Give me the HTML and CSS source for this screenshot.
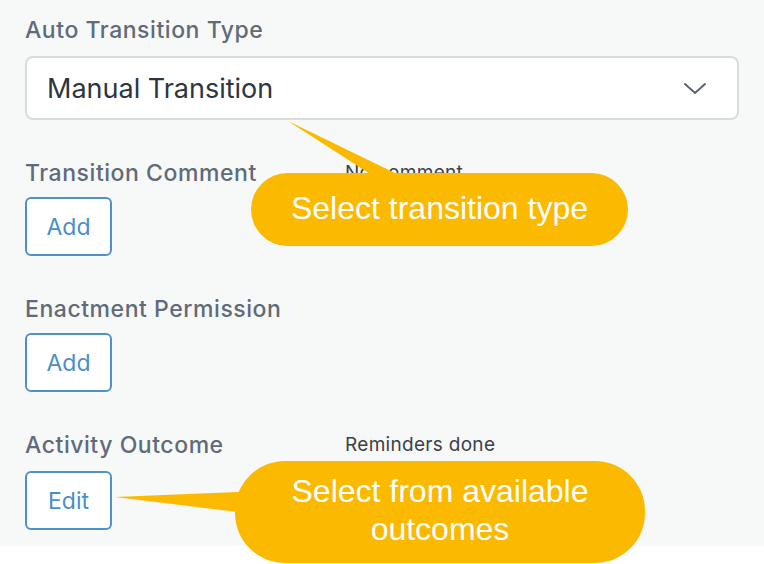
FILE: index.html
```html
<!DOCTYPE html>
<html lang="en">
<head>
<meta charset="utf-8">
<title>Transition settings</title>
<link rel="stylesheet" href="styles.css">
</head>
<body>
<div class="page">
  <div class="field field-first">
    <div class="label">Auto Transition Type</div>
    <div class="select">
      <span class="select-value">Manual Transition</span>
      <svg class="chevron" width="24" height="14" viewBox="0 0 24 14"><polyline points="2,2 12,11 22,2" fill="none" stroke="#5b6470" stroke-width="2" stroke-linecap="round" stroke-linejoin="round"/></svg>
    </div>
  </div>

  <div class="field">
    <div class="row">
      <div class="label">Transition Comment</div>
      <div class="side">No comment</div>
    </div>
    <button class="btn">Add</button>
  </div>

  <div class="field">
    <div class="row">
      <div class="label">Enactment Permission</div>
    </div>
    <button class="btn">Add</button>
  </div>

  <div class="field field-last">
    <div class="row">
      <div class="label">Activity Outcome</div>
      <div class="side">Reminders done</div>
    </div>
    <button class="btn">Edit</button>
  </div>
</div>

<svg class="tails" width="764" height="564" viewBox="0 0 764 564">
  <polygon points="288,121 398,192 434,192" fill="#fbb900"/>
  <polygon points="115,497 262,491 262,515" fill="#fbb900"/>
</svg>
<div class="callout callout-one">Select transition type</div>
<div class="callout callout-two">Select from available<br>outcomes</div>
</body>
</html>
```
FILE: styles.css
```css
* { box-sizing: border-box; }
html, body { margin: 0; padding: 0; background: #ffffff; }
body {
  position: relative;
  width: 764px;
  height: 564px;
  overflow: hidden;
  font-family: Inter, "Noto Sans", sans-serif;
}
.page {
  background: #f7f8f8;
  height: 546px;
  padding: 16px 25px 0 25px;
  display: flex;
  flex-direction: column;
}
.field {
  display: flex;
  flex-direction: column;
  align-items: flex-start;
  gap: 10px;
  margin-top: 39px;
}
.field-first { margin-top: 0; gap: 12px; align-items: stretch; }
.field-last { gap: 12px; }
.row {
  display: grid;
  grid-template-columns: 320px auto;
  align-items: start;
}
.label {
  font-size: 23px;
  line-height: 28px;
  font-weight: 500;
  color: #5f6b78;
  letter-spacing: 0.55px;
}
.side {
  font-size: 19px;
  line-height: 28px;
  color: #3c4146;
  letter-spacing: 0.3px;
}
.select {
  height: 64px;
  width: 714px;
  background: #ffffff;
  border: 2px solid #d9dcdf;
  border-radius: 8px;
  display: flex;
  align-items: center;
  justify-content: space-between;
  padding: 0 30px 0 20px;
}
.select-value {
  font-size: 27px;
  color: #2c3540;
}
.chevron { display: block; margin-top: 2px; }
.btn {
  font-family: Inter, "Noto Sans", sans-serif;
  font-size: 23px;
  color: #4a8ec9;
  background: #ffffff;
  border: 2px solid #4f91c9;
  border-radius: 6px;
  height: 59px;
  width: 87px;
  padding: 0;
  margin: 0;
}
.tails {
  position: absolute;
  left: 0;
  top: 0;
  pointer-events: none;
}
.callout {
  position: absolute;
  background: #fbb900;
  color: #ffffff;
  font-family: "Liberation Sans", Arial, sans-serif;
  font-size: 32px;
  display: flex;
  align-items: center;
  justify-content: center;
  text-align: center;
}
.callout-one {
  left: 251px;
  top: 173px;
  width: 377px;
  height: 73px;
  border-radius: 37px;
  line-height: 36px;
  padding-bottom: 4px;
}
.callout-two {
  left: 235px;
  top: 461px;
  width: 410px;
  height: 102px;
  border-radius: 50px;
  line-height: 38px;
  padding-bottom: 4px;
}
```
